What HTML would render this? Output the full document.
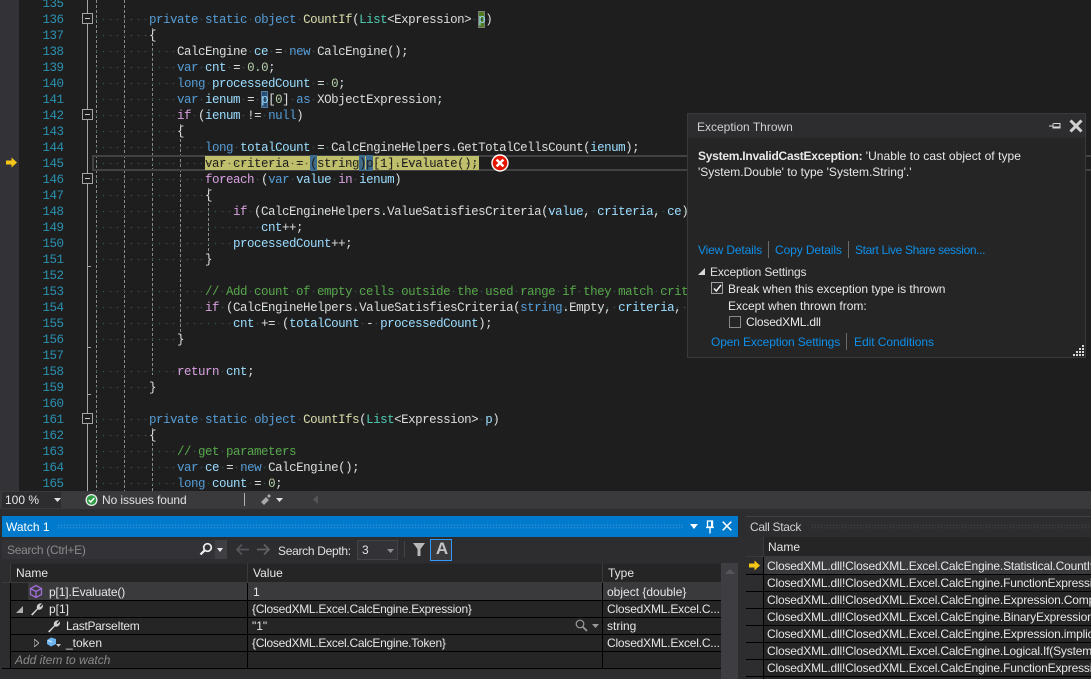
<!DOCTYPE html>
<html><head><meta charset="utf-8"><style>
html,body{margin:0;padding:0;background:#2d2d30;width:1091px;height:679px;overflow:hidden}
#r{position:relative;width:1091px;height:679px;overflow:hidden;background:#2d2d30;font-family:"Liberation Sans",sans-serif;font-size:12px;color:#e6e6e6}
#r div,#r span.a,#r svg{position:absolute}
.t{white-space:nowrap;line-height:16px}
#ed{left:0;top:0;width:1091px;height:491px;background:#1e1e1e;overflow:hidden}
#nums{left:30px;top:-4px;width:33.5px;text-align:right;color:#2b91af;white-space:pre}
#nums,#code{font-family:"Liberation Mono",monospace;font-size:12.5px;line-height:16px;letter-spacing:-.5px}
#code{left:93px;top:-4px;color:#dcdcdc}
#code p{margin:0;height:16px;white-space:pre}
#code p>b{font-weight:normal;display:inline-block;height:16px;background:radial-gradient(circle at 3.5px 7.5px,#2f4445 0 .7px,transparent 1px) 0 0/7px 16px}
#code p>b.nb{background:none}
#code .lead{display:inline-block;height:16px;background:radial-gradient(circle at 3.5px 7.5px,#2f4445 0 .7px,transparent 1px) 0 0/7px 16px}
#code .d{display:inline-block;height:16px;color:#1e1e1e;background:radial-gradient(circle at 3.5px 7.5px,#6a6a3c 0 .7px,transparent 1px) 0 0/7px 16px}
.k{color:#569cd6}.c{color:#d8a0df}.y{color:#dcdcaa}.g{color:#4ec9b0}.n{color:#b5cea8}.m{color:#57a64a}.v{color:#9cdcfe}
.g1{width:1px;background:repeating-linear-gradient(#8b8b8b 0 3px,transparent 3px 5px)}
.fold{left:82px;width:9px;height:9px;border:1px solid #a5a5a5;background:#1e1e1e}
.fold:after{content:"";position:absolute;left:2px;top:4px;width:5px;height:1px;background:#c8c8c8}
.tick{left:87px;width:4px;height:1px;background:#a5a5a5}
.row{height:1px;background:#000}
.cs{left:767px;color:#e6e6e6;letter-spacing:-.18px}
.link{color:#0f8fe8}
.sep{width:1px;background:#6a6a6a}
.bar{left:747px;width:19px;height:16px;background:#2d2d30}
.hd{color:#e6e6e6}
.v2{letter-spacing:-.27px}
</style></head><body><div id="r">

<div id="ed">
<div style="left:0;top:0;width:19px;height:491px;background:#333337"></div>
<div style="left:87px;top:0;width:1px;height:491px;background:#a5a5a5"></div>
<div class="g1" style="left:96px;top:0;height:491px"></div>
<div class="g1" style="left:124px;top:0;height:491px"></div>
<div class="g1" style="left:152px;top:28px;height:347px"></div>
<div class="g1" style="left:152px;top:428px;height:63px"></div>
<div class="g1" style="left:180px;top:124px;height:212px"></div>
<div class="g1" style="left:208px;top:188px;height:66px"></div>
<div class="fold" style="top:13px"></div>
<div class="fold" style="top:109px"></div>
<div class="fold" style="top:173px"></div>
<div class="fold" style="top:413px"></div>
<div class="tick" style="top:266px"></div>
<div class="tick" style="top:347px"></div>
<div class="tick" style="top:394px"></div>

<div style="left:92px;top:155px;width:999px;height:12px;border:2px solid #424242;border-right:0"></div>
<div style="left:205px;top:156px;width:274px;height:14px;background:#c0c06c"></div>
<div style="left:310px;top:155px;width:7px;height:16px;background:#3d6b8d"></div>
<div style="left:359px;top:155px;width:6px;height:16px;background:#3d6b8d"></div>
<div style="left:366px;top:155px;width:7px;height:16px;background:#3d6b8d"></div>
<div style="left:261px;top:91px;width:5px;height:15px;background:#264f78;border:1px solid #5a7a98"></div>
<div style="left:478px;top:11px;width:5px;height:15px;background:#4f7a1e;border:1px solid #7c7c7c"></div>

<div id="nums">135
136
137
138
139
140
141
142
143
144
145
146
147
148
149
150
151
152
153
154
155
156
157
158
159
160
161
162
163
164
165</div>
<div id="code">
<p></p>
<p><b>        <span class="k">private</span> <span class="k">static</span> <span class="k">object</span> <span class="y">CountIf</span>(<span class="g">List</span>&lt;Expression&gt; <span class="v">p</span>)</b></p>
<p><b>        {</b></p>
<p><b>            CalcEngine <span class="v">ce</span> = <span class="k">new</span> CalcEngine();</b></p>
<p><b>            <span class="k">var</span> <span class="v">cnt</span> = <span class="n">0.0</span>;</b></p>
<p><b>            <span class="k">long</span> <span class="v">processedCount</span> = <span class="n">0</span>;</b></p>
<p><b>            <span class="k">var</span> <span class="v">ienum</span> = <span class="v">p</span>[<span class="n">0</span>] <span class="k">as</span> XObjectExpression;</b></p>
<p><b>            <span class="c">if</span> (<span class="v">ienum</span> != <span class="k">null</span>)</b></p>
<p><b>            {</b></p>
<p><b>                <span class="k">long</span> <span class="v">totalCount</span> = CalcEngineHelpers.GetTotalCellsCount(<span class="v">ienum</span>);</b></p>
<p><b class="nb"><span class="lead">                </span><span class="d">var criteria = (string)p[1].Evaluate();</span></b></p>
<p><b>                <span class="c">foreach</span> (<span class="k">var</span> <span class="v">value</span> <span class="c">in</span> <span class="v">ienum</span>)</b></p>
<p><b>                {</b></p>
<p><b>                    <span class="c">if</span> (CalcEngineHelpers.ValueSatisfiesCriteria(<span class="v">value</span>, <span class="v">criteria</span>, <span class="v">ce</span>))</b></p>
<p><b>                        <span class="v">cnt</span>++;</b></p>
<p><b>                    <span class="v">processedCount</span>++;</b></p>
<p><b>                }</b></p>
<p></p>
<p><b>                <span class="m">// Add count of empty cells outside the used range if they match crit</span></b></p>
<p><b>                <span class="c">if</span> (CalcEngineHelpers.ValueSatisfiesCriteria(<span class="k">string</span>.Empty, <span class="v">criteria</span>, <span class="v">ce</span>))</b></p>
<p><b>                    <span class="v">cnt</span> += (<span class="v">totalCount</span> - <span class="v">processedCount</span>);</b></p>
<p><b>            }</b></p>
<p></p>
<p><b>            <span class="c">return</span> <span class="v">cnt</span>;</b></p>
<p><b>        }</b></p>
<p></p>
<p><b>        <span class="k">private</span> <span class="k">static</span> <span class="k">object</span> <span class="y">CountIfs</span>(<span class="g">List</span>&lt;Expression&gt; <span class="v">p</span>)</b></p>
<p><b>        {</b></p>
<p><b>            <span class="m">// get parameters</span></b></p>
<p><b>            <span class="k">var</span> <span class="v">ce</span> = <span class="k">new</span> CalcEngine();</b></p>
<p><b>            <span class="k">long</span> <span class="v">count</span> = <span class="n">0</span>;</b></p>
</div>

<svg style="left:6px;top:157px" width="12" height="11" viewBox="0 0 12 11"><path d="M0 3.5H5.5V0.5L11 5.5L5.5 10.5V7.5H0Z" fill="#f5c518"/></svg>
<svg style="left:491px;top:154px" width="18" height="18" viewBox="0 0 18 18"><circle cx="9" cy="9" r="8" fill="#e51400" stroke="#fff" stroke-width="1.4"/><path d="M5.6 5.6L12.4 12.4M12.4 5.6L5.6 12.4" stroke="#fff" stroke-width="2.4"/></svg>
</div>

<!-- Exception popup -->
<div style="left:687px;top:113px;width:399px;height:245px;background:#252526;border:1px solid #3a3a3c;box-sizing:border-box"></div>
<div style="left:688px;top:114px;width:397px;height:24px;background:#2d2d30"></div>
<div class="t" style="left:697px;top:119px;color:#d0d0d0">Exception Thrown</div>
<svg style="left:1048px;top:120px" width="14" height="12" viewBox="0 0 14 12"><path d="M1 6H5M5 3.5V8.5M5.5 3.5H12V8H5.5M5.5 7H12" stroke="#d8d8d8" fill="none"/></svg>
<svg style="left:1069px;top:119px" width="14" height="14" viewBox="0 0 14 14"><path d="M1.5 1.5L12.5 12.5M12.5 1.5L1.5 12.5" stroke="#d0d0d0" stroke-width="3"/></svg>
<div class="t" style="left:698px;top:148px;color:#e8e8e8"><b style="letter-spacing:-.25px">System.InvalidCastException:</b> <span style="letter-spacing:.05px">'Unable to cast object of type</span></div>
<div class="t" style="left:698px;top:164px;color:#e8e8e8">'System.Double' to type 'System.String'.'</div>
<div class="t link" style="left:698px;top:242px;letter-spacing:-.15px">View Details</div>
<div class="sep" style="left:768px;top:241px;height:17px"></div>
<div class="t link" style="left:775px;top:242px;letter-spacing:-.1px">Copy Details</div>
<div class="sep" style="left:848px;top:241px;height:17px"></div>
<div class="t link" style="left:855px;top:242px;letter-spacing:-.37px">Start Live Share session...</div>
<svg style="left:698px;top:268px" width="8" height="8" viewBox="0 0 8 8"><path d="M0 7H7V0Z" fill="#d8d8d8"/></svg>
<div class="t" style="left:710px;top:264px;color:#e0e0e0;letter-spacing:-.17px">Exception Settings</div>
<div style="left:711px;top:282px;width:10px;height:10px;border:1px solid #a0a0a0;background:#2a2a2c"></div>
<svg style="left:712px;top:283px" width="11" height="11" viewBox="0 0 11 11"><path d="M2 5.5L4.3 8L9 2" stroke="#f0f0f0" stroke-width="1.5" fill="none"/></svg>
<div class="t" style="left:728px;top:281px;color:#e8e8e8">Break when this exception type is thrown</div>
<div class="t" style="left:728px;top:298px;color:#e8e8e8">Except when thrown from:</div>
<div style="left:729px;top:316px;width:10px;height:10px;border:1px solid #8a8a8a"></div>
<div class="t" style="left:746px;top:314px;color:#e8e8e8;letter-spacing:-.2px">ClosedXML.dll</div>
<div class="t link" style="left:711px;top:334px;letter-spacing:-.13px">Open Exception Settings</div>
<div class="sep" style="left:846px;top:333px;height:17px"></div>
<div class="t link" style="left:854px;top:334px;letter-spacing:-.05px">Edit Conditions</div>
<svg style="left:1073px;top:344px" width="12" height="12" viewBox="0 0 12 12" fill="#d8d8d8"><rect x="9" y="1" width="2" height="2"/><rect x="6" y="4" width="2" height="2"/><rect x="9" y="4" width="2" height="2"/><rect x="3" y="7" width="2" height="2"/><rect x="6" y="7" width="2" height="2"/><rect x="9" y="7" width="2" height="2"/><rect x="0" y="10" width="2" height="2"/><rect x="3" y="10" width="2" height="2"/><rect x="6" y="10" width="2" height="2"/><rect x="9" y="10" width="2" height="2"/></svg>

<!-- status bar -->
<div style="left:0;top:491px;width:1091px;height:18px;background:#3a3a3d"></div>
<div style="left:2px;top:492px;width:59px;height:16px;background:#2d2d30"></div>
<div class="t" style="left:5px;top:492px;color:#e8e8e8">100 %</div>
<svg style="left:54px;top:498px" width="7" height="4"><path d="M0 0H7L3.5 4Z" fill="#e0e0e0"/></svg>
<svg style="left:85px;top:493px" width="13" height="14" viewBox="0 0 13 14"><circle cx="6.5" cy="7" r="6" fill="#f0f0f0"/><circle cx="6.5" cy="7" r="4.8" fill="#2f9e44"/><path d="M3.8 7L5.8 9L9.3 5" stroke="#fff" stroke-width="1.5" fill="none"/></svg>
<div class="t" style="left:102px;top:492px;color:#e0e0e0;letter-spacing:-.1px">No issues found</div>
<div style="left:244px;top:493px;width:1px;height:13px;background:#b0b0b0"></div>
<svg style="left:260px;top:494px" width="12" height="13" viewBox="0 0 12 13"><path d="M1 8L6 3L9 6L4 11ZM7 2L9 0L11 2L9 4" fill="#a8a8a8"/></svg>
<svg style="left:276px;top:498px" width="7" height="4"><path d="M0 0H7L3.5 4Z" fill="#e0e0e0"/></svg>
<svg style="left:313px;top:495px" width="5" height="9"><path d="M5 0V9L0 4.5Z" fill="#555558"/></svg>

<!-- Watch panel -->
<div style="left:2px;top:516px;width:736px;height:21px;background:#007acc"></div>
<div class="t" style="left:6px;top:519px;color:#fff">Watch 1</div>
<div style="left:57px;top:524px;width:626px;height:5px;background:radial-gradient(circle,#2a8fd4 .7px,transparent 1px) 0 0/3px 2.5px"></div>
<svg style="left:690px;top:524px" width="8" height="5"><path d="M0 0H8L4 5Z" fill="#fff"/></svg>
<svg style="left:705px;top:520px" width="10" height="14" viewBox="0 0 10 14"><path d="M2.5 1H7.5V7H2.5ZM1 7.5H9M5 8V13.5" stroke="#fff" stroke-width="1.3" fill="none"/><path d="M6 1H7.5V7H6Z" fill="#fff"/></svg>
<svg style="left:722px;top:521px" width="10" height="10" viewBox="0 0 10 10"><path d="M.7.7L9.3 9.3M9.3.7L.7 9.3" stroke="#fff" stroke-width="1.5"/></svg>

<div style="left:2px;top:537px;width:736px;height:142px;background:#2d2d30"></div>
<div style="left:2px;top:540px;width:213px;height:19px;background:#333337"></div>
<div style="left:215px;top:540px;width:12px;height:19px;background:#3f3f43"></div>
<div class="t" style="left:7px;top:542px;color:#8a8a8a;letter-spacing:-.3px">Search (Ctrl+E)</div>
<svg style="left:199px;top:542px" width="14" height="14" viewBox="0 0 14 14"><circle cx="8.5" cy="5.5" r="3.8" fill="none" stroke="#f0f0f0" stroke-width="1.7"/><path d="M5.7 8.3L1.5 12.5" stroke="#f0f0f0" stroke-width="2.2"/></svg>
<svg style="left:217px;top:548px" width="6" height="4"><path d="M0 0H6L3 4Z" fill="#e8e8e8"/></svg>
<svg style="left:235px;top:543px" width="15" height="13" viewBox="0 0 15 13"><path d="M14 6.5H2M7 1.5L2 6.5L7 11.5" stroke="#55555a" stroke-width="1.7" fill="none"/></svg>
<svg style="left:256px;top:543px" width="15" height="13" viewBox="0 0 15 13"><path d="M1 6.5H13M8 1.5L13 6.5L8 11.5" stroke="#606065" stroke-width="1.7" fill="none"/></svg>
<div class="t" style="left:278px;top:543px;color:#e0e0e0;letter-spacing:-.3px">Search Depth:</div>
<div style="left:357px;top:540px;width:39px;height:18px;border:1px solid #434346;background:#333337"></div>
<div class="t" style="left:362px;top:542px;color:#e0e0e0">3</div>
<svg style="left:387px;top:549px" width="7" height="4"><path d="M0 0H7L3.5 4Z" fill="#909090"/></svg>
<div style="left:404px;top:541px;width:1px;height:16px;background:#434346"></div>
<svg style="left:413px;top:543px" width="12" height="13" viewBox="0 0 12 13"><path d="M0 0H12L7.5 6V13H4.5V6Z" fill="#b8b8b8"/></svg>
<div style="left:430px;top:539px;width:20px;height:20px;border:1px solid #3399ff;background:#3a3a3d"></div>
<div class="t" style="left:431px;top:541px;width:22px;text-align:center;color:#c4c4c4;font-weight:bold;font-size:17px">A</div>

<!-- watch grid -->
<div style="left:2px;top:563px;width:719px;height:106px;background:#252526"></div>
<div style="left:2px;top:563px;width:9px;height:106px;background:#2d2d30"></div>
<div style="left:10px;top:563px;width:711px;height:20px;background:#252526"></div>
<div style="left:2px;top:563px;width:719px;height:1px;background:#2a2a2c"></div>
<div class="row" style="left:2px;top:582px;width:719px;background:#3a3a3c"></div>
<div style="left:28px;top:583px;width:693px;height:17px;background:#3a3a3d"></div>
<div class="row" style="left:11px;top:600px;width:710px"></div>
<div class="row" style="left:11px;top:617px;width:710px"></div>
<div class="row" style="left:11px;top:634px;width:710px"></div>
<div class="row" style="left:11px;top:651px;width:710px"></div>
<div class="row" style="left:2px;top:668px;width:719px"></div>
<div style="left:10px;top:563px;width:1px;height:20px;background:#3a3a3c"></div>
<div style="left:247px;top:563px;width:1px;height:20px;background:#3a3a3c"></div>
<div style="left:602px;top:563px;width:1px;height:20px;background:#3a3a3c"></div>
<div style="left:10px;top:583px;width:1px;height:85px;background:#000"></div>
<div style="left:247px;top:583px;width:1px;height:85px;background:#000"></div>
<div style="left:602px;top:583px;width:1px;height:85px;background:#000"></div>
<div style="left:721px;top:563px;width:17px;height:116px;background:#3e3e42"></div>
<svg style="left:725px;top:569px" width="10" height="5"><path d="M0 5H10L5 0Z" fill="#55555a"/></svg>
<div class="t hd" style="left:16px;top:565px">Name</div>
<div class="t hd" style="left:253px;top:565px">Value</div>
<div class="t hd" style="left:608px;top:565px">Type</div>

<svg style="left:29px;top:584px" width="14" height="15" viewBox="0 0 14 15"><path d="M7 1.5L12.5 4.5V10.5L7 13.5L1.5 10.5V4.5ZM1.5 4.5L7 7.5L12.5 4.5M7 7.5V13.5" fill="none" stroke="#a06cd5" stroke-width="1.3"/></svg>
<div class="t" style="left:49px;top:584px;letter-spacing:-.13px">p[1].Evaluate()</div>
<div class="t" style="left:253px;top:584px">1</div>
<div class="t" style="left:607px;top:584px">object {double}</div>

<svg style="left:16px;top:606px" width="7" height="7"><path d="M0 7H7V0Z" fill="#b0b0b0"/></svg>
<svg style="left:30px;top:602px" width="14" height="14" viewBox="0 0 14 14"><path d="M1 12.5L7 6.5C6 3.5 8.5 .8 12 1.5L9.5 4L10.5 5L13 2.5C13.5 6 10.5 8.5 7.8 7.5L2.5 13.5Z" fill="#d0d0d0"/></svg>
<div class="t" style="left:49px;top:601px">p[1]</div>
<div class="t v2" style="left:252px;top:601px">{ClosedXML.Excel.CalcEngine.Expression}</div>
<div class="t" style="left:607px;top:601px;letter-spacing:-.2px">ClosedXML.Excel.C...</div>

<svg style="left:47px;top:619px" width="14" height="14" viewBox="0 0 14 14"><path d="M1 12.5L7 6.5C6 3.5 8.5 .8 12 1.5L9.5 4L10.5 5L13 2.5C13.5 6 10.5 8.5 7.8 7.5L2.5 13.5Z" fill="#d0d0d0"/></svg>
<div class="t" style="left:66px;top:618px;letter-spacing:-.3px">LastParseItem</div>
<div class="t" style="left:252px;top:618px">"1"</div>
<svg style="left:575px;top:619px" width="13" height="13" viewBox="0 0 13 13"><circle cx="5" cy="5" r="3.8" fill="none" stroke="#9a9a9a" stroke-width="1.2"/><path d="M8 8L12 12" stroke="#9a9a9a" stroke-width="1.8"/></svg>
<svg style="left:592px;top:624px" width="7" height="4"><path d="M0 0H7L3.5 4Z" fill="#9a9a9a"/></svg>
<div class="t" style="left:607px;top:618px">string</div>

<svg style="left:34px;top:639px" width="5" height="8"><path d="M0 0L5 4L0 8Z" fill="none" stroke="#b0b0b0"/></svg>
<svg style="left:46px;top:636px" width="16" height="14" viewBox="0 0 16 14"><path d="M1 4L5 1.5L10 3V8L5 10.5L1 8Z" fill="#6cb4ee"/><path d="M10 8H15L12.5 11Z" fill="#c8c8c8"/><path d="M2 4.5L6 6" stroke="#d8ecff"/></svg>
<div class="t" style="left:66px;top:635px">_token</div>
<div class="t v2" style="left:252px;top:635px">{ClosedXML.Excel.CalcEngine.Token}</div>
<div class="t" style="left:607px;top:635px;letter-spacing:-.2px">ClosedXML.Excel.C...</div>

<div class="t" style="left:15px;top:652px;color:#8a8a8a;font-style:italic">Add item to watch</div>

<!-- Call stack -->
<div style="left:746px;top:516px;width:345px;height:163px;background:#252526"></div>
<div style="left:746px;top:516px;width:345px;height:21px;background:#2d2d30;border-top:1px solid #3f3f46;box-sizing:border-box"></div>
<div class="t" style="left:750px;top:519px;color:#d0d0d0;letter-spacing:-.3px">Call Stack</div>
<div style="left:811px;top:524px;width:280px;height:5px;background:radial-gradient(circle,#3c3c40 .7px,transparent 1px) 0 0/3px 2.5px"></div>
<div style="left:746px;top:537px;width:17px;height:19px;background:#2d2d30"></div>
<div style="left:763px;top:537px;width:1px;height:19px;background:#3a3a3c"></div>
<div class="t hd" style="left:768px;top:539px">Name</div>
<div class="row" style="left:746px;top:556px;width:345px;background:#3a3a3c"></div>
<div class="bar" style="top:557px;left:746px;background:#2d2d30"></div>
<div style="left:763px;top:557px;width:328px;height:17px;background:#3a3a3d"></div>
<div style="left:746px;top:574px;width:17px;height:105px;background:#2d2d30"></div>
<div style="left:763px;top:557px;width:1px;height:122px;background:#000"></div>
<div class="row" style="left:746px;top:574px;width:345px"></div>
<div class="row" style="left:746px;top:591px;width:345px"></div>
<div class="row" style="left:746px;top:608px;width:345px"></div>
<div class="row" style="left:746px;top:625px;width:345px"></div>
<div class="row" style="left:746px;top:642px;width:345px"></div>
<div class="row" style="left:746px;top:659px;width:345px"></div>
<div class="row" style="left:746px;top:676px;width:345px"></div>
<svg style="left:749px;top:560px" width="12" height="11" viewBox="0 0 12 11"><path d="M0 3.5H5.5V0.5L11 5.5L5.5 10.5V7.5H0Z" fill="#f5c518"/></svg>
<div class="t cs" style="top:558px">ClosedXML.dll!ClosedXML.Excel.CalcEngine.Statistical.CountIf(System.Collections.Generic.List)</div>
<div class="t cs" style="top:575px">ClosedXML.dll!ClosedXML.Excel.CalcEngine.FunctionExpression.Evaluate()</div>
<div class="t cs" style="top:592px">ClosedXML.dll!ClosedXML.Excel.CalcEngine.Expression.CompareTo(System.Object)</div>
<div class="t cs" style="top:609px">ClosedXML.dll!ClosedXML.Excel.CalcEngine.BinaryExpression.Evaluate()</div>
<div class="t cs" style="top:626px">ClosedXML.dll!ClosedXML.Excel.CalcEngine.Expression.implicit operator</div>
<div class="t cs" style="top:643px">ClosedXML.dll!ClosedXML.Excel.CalcEngine.Logical.If(System.Collections.Generic.List)</div>
<div class="t cs" style="top:660px">ClosedXML.dll!ClosedXML.Excel.CalcEngine.FunctionExpression.Evaluate()</div>

</div></body></html>
